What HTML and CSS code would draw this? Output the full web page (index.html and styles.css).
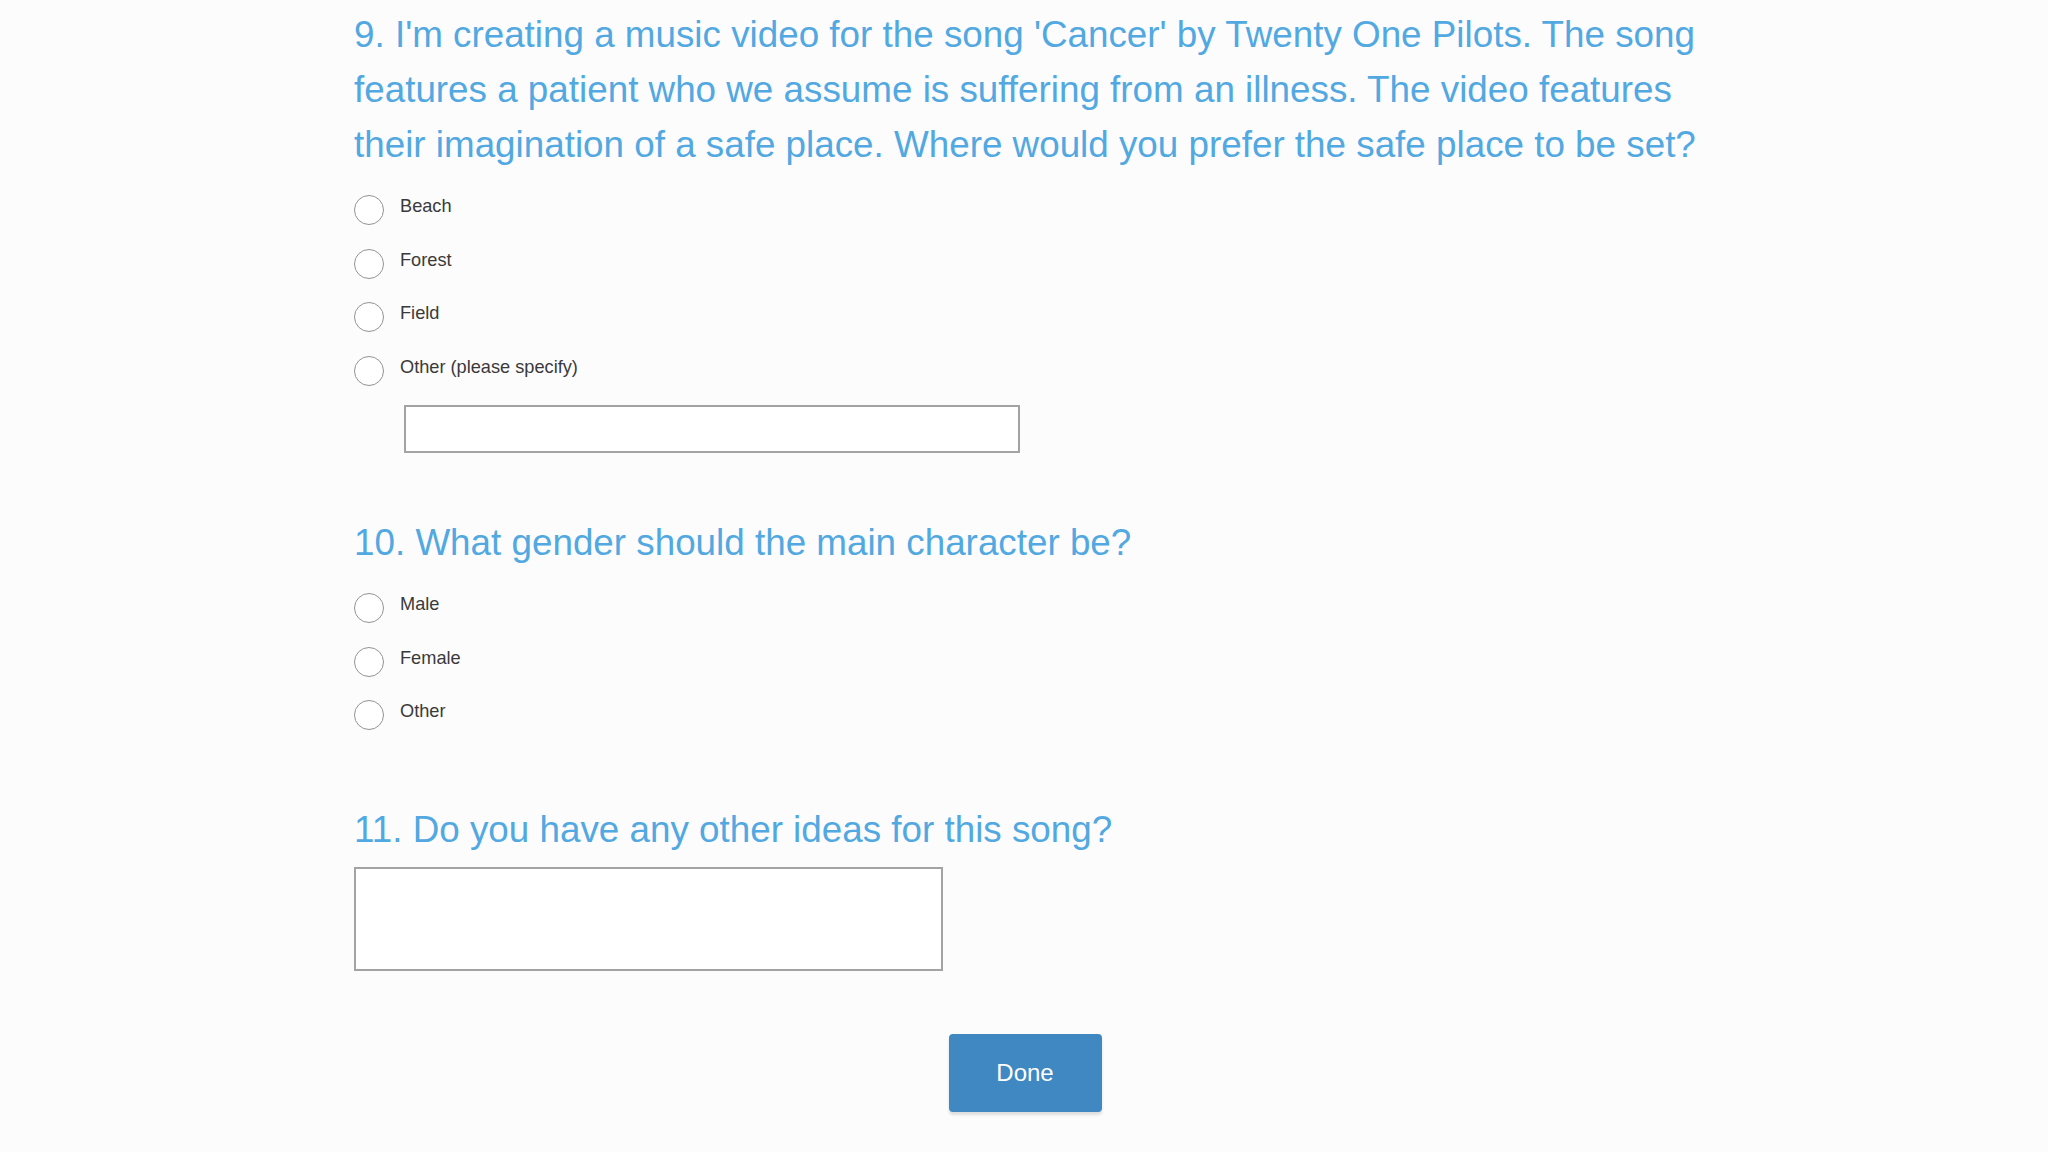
FILE: index.html
```html
<!DOCTYPE html>
<html lang="en">
<head>
<meta charset="utf-8">
<title>Survey</title>
<link rel="stylesheet" href="styles.css">
</head>
<body>
<main class="survey">
  <section class="question q9">
    <h2 class="q-title">9. I'm creating a music video for the song 'Cancer' by Twenty One Pilots. The song features a patient who we assume is suffering from an illness. The video features their imagination of a safe place. Where would you prefer the safe place to be set?</h2>
    <ul class="options">
      <li class="option"><span class="radio"></span><span class="label">Beach</span></li>
      <li class="option"><span class="radio"></span><span class="label">Forest</span></li>
      <li class="option"><span class="radio"></span><span class="label">Field</span></li>
      <li class="option"><span class="radio"></span><span class="label">Other (please specify)</span></li>
    </ul>
    <input class="other-input" type="text" aria-label="Other (please specify)">
  </section>

  <section class="question q10">
    <h2 class="q-title">10. What gender should the main character be?</h2>
    <ul class="options">
      <li class="option"><span class="radio"></span><span class="label">Male</span></li>
      <li class="option"><span class="radio"></span><span class="label">Female</span></li>
      <li class="option"><span class="radio"></span><span class="label">Other</span></li>
    </ul>
  </section>

  <section class="question q11">
    <h2 class="q-title">11. Do you have any other ideas for this song?</h2>
    <textarea class="ideas" aria-label="Other ideas"></textarea>
  </section>
</main>
<div class="actions">
  <button class="done" type="button">Done</button>
</div>
</body>
</html>
```

FILE: styles.css
```css
html, body {
  margin: 0;
  padding: 0;
}

body {
  background: #fcfcfd;
  font-family: "Liberation Sans", Arial, sans-serif;
  width: 2048px;
  height: 1152px;
  overflow: hidden;
}

.survey {
  margin-left: 354px;
  width: 1360px;
  padding-top: 7px;
}

.q-title {
  margin: 0;
  font-weight: normal;
  font-size: 36.8px;
  line-height: 55px;
  color: #52a8e1;
}

.options {
  list-style: none;
  margin: 0;
  padding: 0;
  display: flex;
  flex-direction: column;
  gap: 23.5px;
}

.option {
  display: flex;
  align-items: flex-start;
  gap: 16px;
  height: 30px;
}

.radio {
  box-sizing: border-box;
  width: 30px;
  height: 30px;
  border-radius: 50%;
  border: 1.5px solid #939393;
  background: #ffffff;
  flex: none;
}

.label {
  font-size: 18.2px;
  line-height: 20px;
  color: #3a3a3a;
  margin-top: 1px;
}

.q9 .options {
  margin-top: 23px;
}

.other-input {
  display: block;
  box-sizing: border-box;
  margin: 19.5px 0 0 50px;
  width: 616px;
  height: 48px;
  border: 2px solid #a3a3a3;
  border-radius: 0;
  background: #ffffff;
  padding: 0;
  outline: none;
}

.q10 {
  margin-top: 62px;
}

.q10 .options {
  margin-top: 23px;
}

.q11 {
  margin-top: 72px;
}

.ideas {
  display: block;
  box-sizing: border-box;
  margin: 10px 0 0 0;
  width: 589px;
  height: 104px;
  border: 2px solid #a3a3a3;
  border-radius: 0;
  background: #ffffff;
  resize: none;
  padding: 0;
  outline: none;
}

.actions {
  display: flex;
  justify-content: center;
  margin-top: 63px;
  padding-left: 2px;
}

.done {
  width: 153px;
  height: 78px;
  border: none;
  border-radius: 4px;
  background: #3f88c1;
  color: #ffffff;
  font-family: "Liberation Sans", Arial, sans-serif;
  font-size: 24px;
  box-shadow: 0 3px 3px rgba(0, 0, 0, 0.12);
  cursor: pointer;
}
```
